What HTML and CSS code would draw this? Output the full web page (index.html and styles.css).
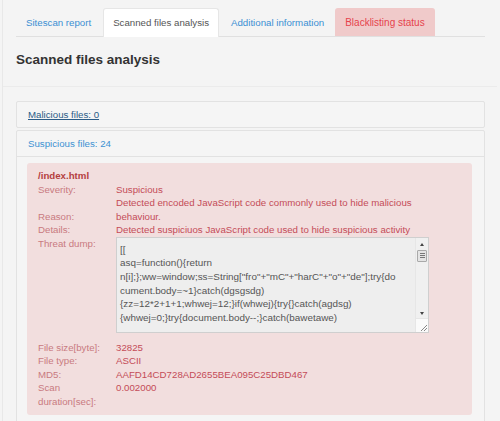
FILE: index.html
```html
<!DOCTYPE html>
<html>
<head>
<meta charset="utf-8">
<link rel="stylesheet" href="styles.css">
</head>
<body>
<div class="page">
  <ul class="tabs">
    <li class="tab">Sitescan report</li>
    <li class="tab active">Scanned files analysis</li>
    <li class="tab">Additional information</li>
    <li class="tab danger">Blacklisting status</li>
  </ul>
  <div class="title-wrap">
    <h2 class="title">Scanned files analysis</h2>
  </div>
  <div class="panel">
    <div class="panel-heading"><a class="link dark">Malicious files: 0</a></div>
  </div>
  <div class="panel">
    <div class="panel-heading"><a class="link">Suspicious files: 24</a></div>
    <div class="panel-body">
      <div class="alert">
        <div class="file-title">/index.html</div>
        <div class="details">
          <div class="lbl">Severity:</div>
          <div class="val">Suspicious</div>
          <div class="lbl bottom">Reason:</div>
          <div class="val">Detected encoded JavaScript code commonly used to hide malicious behaviour.</div>
          <div class="lbl">Details:</div>
          <div class="val">Detected suspiciuos JavaScript code used to hide suspicious activity</div>
          <div class="lbl">Threat dump:</div>
          <div class="val">
            <div class="dump">
              <div class="dump-text">[[
asq=function(){return
n[i];};ww=window;ss=String["fro"+"mC"+"harC"+"o"+"de"];try{do
cument.body=~1}catch(dgsgsdg)
{zz=12*2+1+1;whwej=12;}if(whwej){try{}catch(agdsg)
{whwej=0;}try{document.body--;}catch(bawetawe)</div>
              <div class="scrollbar">
                <div class="arrow up"></div>
                <div class="thumb"><span></span><span></span><span></span></div>
                <div class="track"></div>
                <div class="arrow down"></div>
                <div class="grip">
                  <svg width="11" height="11" viewBox="0 0 11 11"><path d="M10 4 L4 10 M10 7 L7 10" stroke="#888" stroke-width="1" fill="none"/></svg>
                </div>
              </div>
            </div>
          </div>
          <div class="lbl">File size[byte]:</div>
          <div class="val">32825</div>
          <div class="lbl">File type:</div>
          <div class="val">ASCII</div>
          <div class="lbl">MD5:</div>
          <div class="val">AAFD14CD728AD2655BEA095C25DBD467</div>
          <div class="lbl">Scan duration[sec]:</div>
          <div class="val">0.002000</div>
        </div>
      </div>
    </div>
  </div>
</div>
</body>
</html>
```
FILE: styles.css
```css
html, body {
  margin: 0;
  padding: 0;
  background: #f4f4f4;
  height: 100%;
  overflow: hidden;
}
body {
  font-family: "Liberation Sans", Arial, sans-serif;
  font-size: 9.7px;
  color: #333;
}
.page {
  margin-left: 2px;
  border-left: 1px solid #e8e8e8;
  padding: 8px 0 0 13px;
  width: 469px;
  min-height: 421px;
}
.tabs {
  list-style: none;
  margin: 0;
  padding: 0;
  display: flex;
  border-bottom: 1px solid #e0e0e0;
  height: 28px;
}
.tab {
  height: 28px;
  line-height: 29px;
  padding: 0 10px;
  margin-right: 2px;
  color: #3b8fd3;
  font-size: 9.7px;
  border-radius: 3px 3px 0 0;
  box-sizing: border-box;
}
.tab.active {
  background: #fff;
  color: #555;
  border: 1px solid #e6e6e6;
  border-bottom: none;
  height: 29px;
  padding: 0 9px;
  line-height: 27px;
}
.tab.danger {
  background: #f0caca;
  color: #e6424c;
  margin-left: -1px;
  font-size: 10px;
}
.title-wrap {
  margin-left: -13px;
  padding-left: 13px;
  border-bottom: 1px solid #ebebeb;
  padding-bottom: 18px;
  margin-right: -12px;
}
.title {
  margin: 15px 0 0 0;
  font-size: 13.5px;
  line-height: 16px;
  font-weight: bold;
  color: #333;
}
.panel {
  border: 1px solid #e2e2e2;
  border-radius: 2px;
  background: #f5f5f5;
  margin-bottom: 2px;
}
.title-wrap + .panel {
  margin-top: 14px;
}
.panel-heading {
  padding: 6px 11px 6px 11px;
  line-height: 13px;
  font-size: 9.7px;
}
.link {
  color: #3d92d3;
}
.link.dark {
  color: #2b5c87;
  text-decoration: underline;
}
.panel-body {
  border-top: 1px solid #e2e2e2;
  padding: 6px 12px 8px 10px;
}
.alert {
  background: #f2dede;
  border-radius: 3px;
  padding: 6px 11px 7px 11px;
  line-height: 13.5px;
  color: #c44c58;
}
.file-title {
  font-weight: bold;
  color: #b4403f;
}
.details {
  display: grid;
  grid-template-columns: 78px 320px;
}
.lbl {
  color: #c97a80;
  padding-right: 2px;
}
.lbl.bottom {
  align-self: end;
}
.val {
  color: #c44c58;
}
.dump {
  width: 313px;
  height: 96px;
  box-sizing: border-box;
  border: 1px solid #cfcfcf;
  background: #eeeeee;
  display: flex;
  margin-bottom: 8px;
  overflow: hidden;
}
.dump-text {
  flex: 1;
  white-space: pre;
  overflow: hidden;
  padding: 5px 3px;
  color: #555;
  font-size: 9.9px;
  line-height: 13.7px;
}
.scrollbar {
  width: 12px;
  display: flex;
  flex-direction: column;
  background: #f0f0f0;
  border-left: 1px solid #e6e6e6;
}
.arrow {
  height: 9px;
  display: flex;
  align-items: center;
  justify-content: center;
}
.arrow::before {
  content: "";
  width: 0;
  height: 0;
  border-left: 2.5px solid transparent;
  border-right: 2.5px solid transparent;
}
.arrow.up {
  margin-top: 2px;
}
.arrow.up::before {
  border-bottom: 3px solid #444;
}
.arrow.down::before {
  border-top: 3px solid #444;
}
.thumb {
  margin: 1px 1px 0 1px;
  height: 10px;
  border: 1px solid #a9a9a9;
  background: #e4e4e4;
  border-radius: 1px;
  display: flex;
  flex-direction: column;
  justify-content: center;
  align-items: center;
  gap: 1px;
}
.thumb span {
  width: 5px;
  height: 1px;
  background: #777;
}
.track {
  flex: 1;
}
.grip {
  height: 13px;
  background: #fafafa;
  border-top: 1px solid #e6e6e6;
  display: flex;
  align-items: flex-end;
  justify-content: flex-end;
}
.grip svg {
  display: block;
}
```
